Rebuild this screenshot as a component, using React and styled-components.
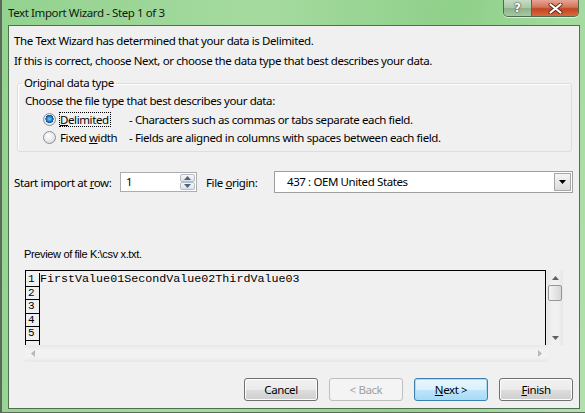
import React from "react"
import styled, { createGlobalStyle } from "styled-components"

const GlobalStyle = createGlobalStyle`
    html, body {
        margin: 0;
        padding: 0;
        background: #8fd28b;
    }
    * {
        box-sizing: border-box;
    }
`;

const ui = `"Noto Sans", "Liberation Sans", sans-serif`;

const rows = [1, 2, 3, 4, 5, 6];

const App = () =>
    <>
        <GlobalStyle/>
        <Window>
            <TitleBar>
                <Title>Text Import Wizard - Step 1 of 3</Title>
                <CaptionButtons>
                    <HelpButton>?</HelpButton>
                    <CloseButton>
                        <svg width="15" height="11" viewBox="0 0 15 11">
                            <path d="M2.5 1.5 L12.5 9.5 M12.5 1.5 L2.5 9.5" stroke="#5a2a1e" strokeWidth="4" strokeLinecap="round"/>
                            <path d="M2.5 1.5 L12.5 9.5 M12.5 1.5 L2.5 9.5" stroke="#fff" strokeWidth="2.2" strokeLinecap="round"/>
                        </svg>
                    </CloseButton>
                </CaptionButtons>
            </TitleBar>
            <Client>
                <Line>The Text Wizard has determined that your data is Delimited.</Line>
                <Line>If this is correct, choose Next, or choose the data type that best describes your data.</Line>
                <GroupBox>
                    <Legend>Original data type</Legend>
                    <GroupText>Choose the file type that best describes your data:</GroupText>
                    <RadioRow>
                        <Radio checked/>
                        <RadioLabel>
                            <LabelText focused><u>D</u>elimited</LabelText>
                        </RadioLabel>
                        <span>- Characters such as commas or tabs separate each field.</span>
                    </RadioRow>
                    <RadioRow>
                        <Radio/>
                        <RadioLabel>
                            <LabelText>Fixed <u>w</u>idth</LabelText>
                        </RadioLabel>
                        <span>- Fields are aligned in columns with spaces between each field.</span>
                    </RadioRow>
                </GroupBox>
                <ImportRow>
                    <FieldLabel width={106}>Start import at <u>r</u>ow:</FieldLabel>
                    <SpinBox>
                        <SpinValue>1</SpinValue>
                        <SpinButtons>
                            <SpinButton>
                                <svg width="7" height="4" viewBox="0 0 7 4"><path d="M0 4 L3.5 0 L7 4Z" fill="#4d6185"/></svg>
                            </SpinButton>
                            <SpinButton>
                                <svg width="7" height="4" viewBox="0 0 7 4"><path d="M0 0 L3.5 4 L7 0Z" fill="#4d6185"/></svg>
                            </SpinButton>
                        </SpinButtons>
                    </SpinBox>
                    <FieldLabel width={68}>File <u>o</u>rigin:</FieldLabel>
                    <Select>
                        <SelectValue>437 : OEM United States</SelectValue>
                        <DropButton>
                            <svg width="7" height="4" viewBox="0 0 7 4"><path d="M0 0 L3.5 4 L7 0Z" fill="#000"/></svg>
                        </DropButton>
                    </Select>
                </ImportRow>
                <PreviewLabel>Preview of file K:\csv x.txt.</PreviewLabel>
                <Preview>
                    <PreviewBody>
                        <PreviewText>
                            {rows.map(n =>
                                <PreviewRow key={n}>
                                    <LineNumber>{n < 6 ? n : ""}</LineNumber>
                                    <RowText>{n === 1 ? "FirstValue01SecondValue02ThirdValue03" : ""}</RowText>
                                </PreviewRow>
                            )}
                        </PreviewText>
                        <VScroll>
                            <ArrowCell>
                                <svg width="7" height="4" viewBox="0 0 7 4"><path d="M0 4 L3.5 0 L7 4Z" fill="#606060"/></svg>
                            </ArrowCell>
                            <Thumb/>
                            <Spacer/>
                            <ArrowCell>
                                <svg width="7" height="4" viewBox="0 0 7 4"><path d="M0 0 L3.5 4 L7 0Z" fill="#606060"/></svg>
                            </ArrowCell>
                        </VScroll>
                    </PreviewBody>
                    <HScroll>
                        <svg width="4" height="7" viewBox="0 0 4 7"><path d="M4 0 L0 3.5 L4 7Z" fill="#b8b8b8"/></svg>
                        <svg width="4" height="7" viewBox="0 0 4 7"><path d="M0 0 L4 3.5 L0 7Z" fill="#b8b8b8"/></svg>
                    </HScroll>
                </Preview>
                <ButtonRow>
                    <Button>Cancel</Button>
                    <Button disabled>&lt; Back</Button>
                    <Button primary><u>N</u>ext &gt;</Button>
                    <Button><u>F</u>inish</Button>
                </ButtonRow>
            </Client>
        </Window>
    </>;

const Window = styled.div`
    width: 585px;
    height: 413px;
    display: flex;
    flex-direction: column;
    background: linear-gradient(100deg, #93d28f 0%, #a5da9f 40%, #8fd08a 70%, #b3e1ad 100%);
    border-left: 2px solid #5c6a5c;
    border-bottom: 1px solid #5c6a5c;
    font-family: ${ui};
    font-size: 11.5px;
    letter-spacing: -0.4px;
    color: #000;
    overflow: hidden;
`;

const TitleBar = styled.div`
    height: 25px;
    display: flex;
    align-items: flex-start;
    padding-left: 6px;
    flex-shrink: 0;
`;

const Title = styled.div`
    line-height: 26px;
    color: #101a10;
`;

const CaptionButtons = styled.div`
    margin-left: auto;
    margin-right: 6px;
    display: flex;
    height: 17px;
    border: 1px solid #4d6a4d;
    border-top: none;
    border-radius: 0 0 5px 5px;
    overflow: hidden;
    box-shadow: 0 1px 0 rgba(255, 255, 255, 0.6);
    letter-spacing: 0;
`;

const HelpButton = styled.div`
    width: 28px;
    display: flex;
    align-items: center;
    justify-content: center;
    font-family: "DejaVu Sans", sans-serif;
    font-weight: bold;
    font-size: 12px;
    color: #fff;
    text-shadow: 0 0 2px #333, 0 0 1px #333;
    background: linear-gradient(180deg, #c7dcc5 0%, #a9c6a7 50%, #8eb08b 51%, #a8c8a4 100%);
    border-right: 1px solid #4d6a4d;
`;

const CloseButton = styled.div`
    width: 46px;
    display: flex;
    align-items: center;
    justify-content: center;
    background: linear-gradient(180deg, #e8a493 0%, #d2735c 45%, #c2441f 55%, #d86a40 100%);
`;

const Client = styled.div`
    flex: 1;
    margin: 0 5px 3px 6px;
    background: #f0f0f0;
    border: 1px solid #4f6f4f;
    display: flex;
    flex-direction: column;
    padding: 5px 6px 0 5px;
`;

const Line = styled.div`
    line-height: 20px;
    height: 20px;
    white-space: nowrap;
`;

const GroupBox = styled.fieldset`
    margin: 4px 1px 0 3px;
    padding: 0 0 0 7px;
    border: 1px solid #d5dfe5;
    border-radius: 3px;
    box-shadow: inset 1px 1px 0 #fff;
    height: 77px;
`;

const Legend = styled.legend`
    padding: 0 2px;
    margin-left: -3px;
    line-height: 16px;
`;

const GroupText = styled.div`
    line-height: 18px;
    margin-top: 1px;
    white-space: nowrap;
`;

const RadioRow = styled.div`
    display: flex;
    align-items: center;
    height: 18px;
    padding-left: 18px;
    white-space: nowrap;
`;

const Radio = styled.span`
    width: 13px;
    height: 13px;
    border-radius: 50%;
    border: 1px solid #8a8f96;
    background: ${props => props.checked
        ? "radial-gradient(circle at 50% 45%, #7fd0f5 0%, #2a8ad2 28%, #0d4d8f 48%, #e8ecf0 52%, #dfe3e8 100%)"
        : "radial-gradient(circle at 40% 35%, #ffffff 0%, #e9ebee 50%, #cfd3d8 100%)"};
    flex-shrink: 0;
`;

const RadioLabel = styled.span`
    width: 70px;
    margin-left: 3px;
    flex-shrink: 0;
`;

const LabelText = styled.span`
    padding: 0 2px 0 1px;
    line-height: 15px;
    display: inline-block;
    outline: ${props => props.focused ? "1px dotted #000" : "none"};
    outline-offset: -1px;
`;

const ImportRow = styled.div`
    display: flex;
    align-items: center;
    margin-top: 19px;
    height: 22px;
`;

const FieldLabel = styled.span`
    width: ${props => props.width}px;
    white-space: nowrap;
    flex-shrink: 0;
`;

const SpinBox = styled.div`
    width: 77px;
    height: 20px;
    display: flex;
    border: 1px solid #abadb3;
    background: #fff;
    margin-right: 9px;
`;

const SpinValue = styled.div`
    flex: 1;
    padding-left: 5px;
    line-height: 18px;
`;

const SpinButtons = styled.div`
    width: 17px;
    display: flex;
    flex-direction: column;
    padding: 1px;
`;

const SpinButton = styled.div`
    flex: 1;
    display: flex;
    align-items: center;
    justify-content: center;
    border: 1px solid #b6bdc6;
    border-radius: 2px;
    background: linear-gradient(180deg, #f6f7f8, #dee2e6);
`;

const Select = styled.div`
    width: 299px;
    height: 22px;
    display: flex;
    border: 1px solid #a0a0a0;
    background: #fff;
`;

const SelectValue = styled.div`
    flex: 1;
    padding-left: 12px;
    line-height: 20px;
`;

const DropButton = styled.div`
    width: 17px;
    margin: 1px;
    display: flex;
    align-items: center;
    justify-content: center;
    border: 1px solid #a8a8a8;
    background: linear-gradient(180deg, #f4f4f4, #dcdcdc);
`;

const PreviewLabel = styled.div`
    margin-top: 54px;
    margin-left: 10px;
    font-family: "Liberation Sans", sans-serif;
    font-size: 11px;
    letter-spacing: -0.35px;
    line-height: 14px;
`;

const Preview = styled.div`
    margin: 9px 0 0 11px;
    width: 538px;
    display: flex;
    flex-direction: column;
    letter-spacing: 0;
`;

const PreviewBody = styled.div`
    display: flex;
    height: 75px;
`;

const PreviewText = styled.div`
    width: 523px;
    border: 1px solid #000;
    border-bottom: none;
    overflow: hidden;
    padding-top: 2px;
`;

const PreviewRow = styled.div`
    display: flex;
    height: 13.6px;
`;

const LineNumber = styled.div`
    width: 14px;
    flex-shrink: 0;
    border-right: 1px solid #000;
    border-bottom: 1px solid #000;
    font-family: "Liberation Mono", monospace;
    font-size: 11px;
    line-height: 13px;
    padding-left: 2px;
`;

const RowText = styled.div`
    font-family: "Liberation Mono", monospace;
    font-size: 11.7px;
    line-height: 13px;
    white-space: pre;
`;

const VScroll = styled.div`
    width: 16px;
    margin-left: 1px;
    display: flex;
    flex-direction: column;
    background: linear-gradient(90deg, #e6e6e6, #f0f0f0 30%, #f0f0f0 70%, #e6e6e6);
`;

const ArrowCell = styled.div`
    height: 15px;
    display: flex;
    align-items: center;
    justify-content: center;
`;

const Thumb = styled.div`
    height: 16px;
    margin: 0 1px;
    border: 1px solid #979797;
    border-radius: 2px;
    background: linear-gradient(90deg, #f4f4f4, #e6e6e6 50%, #d6d6d6);
`;

const Spacer = styled.div`
    flex: 1;
`;

const HScroll = styled.div`
    width: 523px;
    height: 17px;
    display: flex;
    align-items: center;
    justify-content: space-between;
    padding: 0 6px;
    background: linear-gradient(180deg, #e8e8e8, #f2f2f2 30%, #f2f2f2 70%, #e8e8e8);
`;

const ButtonRow = styled.div`
    display: flex;
    justify-content: flex-end;
    gap: 11px;
    margin-top: auto;
    margin-bottom: 7px;
`;

const Button = styled.div`
    width: 74px;
    height: 23px;
    display: flex;
    align-items: center;
    justify-content: center;
    border-radius: 3px;
    border: 1px solid ${props => props.disabled ? "#bfbfbf" : props.primary ? "#3c7fb1" : "#707070"};
    color: ${props => props.disabled ? "#a0a0a0" : "#000"};
    background: ${props => props.disabled
        ? "#f4f4f4"
        : props.primary
            ? "linear-gradient(180deg, #eaf6fd 0%, #d9f0fc 50%, #bee6fd 51%, #a7d9f5 100%)"
            : "linear-gradient(180deg, #f2f2f2 0%, #ebebeb 50%, #dddddd 51%, #cfcfcf 100%)"};
    box-shadow: inset 0 0 0 1px ${props => props.disabled ? "#f4f4f4" : props.primary ? "#a8ddf7" : "#fcfcfc"};
`;

export default App
